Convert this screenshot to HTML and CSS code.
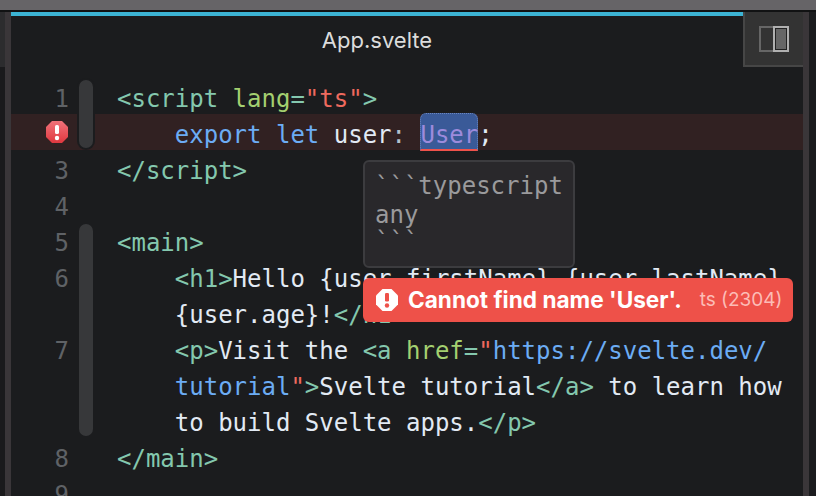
FILE: index.html
```html
<!DOCTYPE html>
<html lang="en">
<head>
<meta charset="utf-8">
<title>App.svelte</title>
<link rel="stylesheet" href="styles.css">
</head>
<body>
<div class="topbar"></div>
<div class="window">
  <div class="side-left"><div class="side-left-inner"></div></div>
  <main class="editor">
    <header class="head">
      <div class="tabline"></div>
      <div class="title">App.svelte</div>
      <button class="toggle" aria-label="Toggle preview">
        <svg width="30" height="26" viewBox="0 0 30 26">
          <rect x="1" y="1" width="15" height="24" fill="#333" stroke="#666" stroke-width="2"/>
          <rect x="15" y="1" width="14" height="24" fill="#666" stroke="#b0b0b0" stroke-width="2"/>
          <rect x="16.5" y="2.5" width="11" height="21" fill="none" stroke="#222" stroke-width="1"/>
        </svg>
      </button>
    </header>
    <div class="code">
      <div class="row"><span class="num">1</span><code class="txt"><span class="tag">&lt;script</span> <span class="attr">lang</span><span class="tag">=</span><span class="str">"ts"</span><span class="tag">&gt;</span></code></div>
      <div class="row err"><span class="num"><svg class="err-ic" width="24" height="24" viewBox="0 0 24 24"><defs><linearGradient id="eg" x1="0" y1="0" x2="0" y2="1"><stop offset="0" stop-color="#f0727a"/><stop offset="1" stop-color="#e0383f"/></linearGradient></defs><polygon points="7,1 17,1 23,7 23,17 17,23 7,23 1,17 1,7" fill="url(#eg)"/><rect x="10" y="5" width="4" height="9" rx="1.6" fill="#fff"/><circle cx="12" cy="18" r="2.2" fill="#fff"/></svg></span><code class="txt">    <span class="kw">export let</span> user<span class="pl">:</span> <span class="sel">User</span>;</code></div>
      <div class="row"><span class="num">3</span><code class="txt"><span class="tag">&lt;/script&gt;</span></code></div>
      <div class="row"><span class="num">4</span><code class="txt"></code></div>
      <div class="row"><span class="num">5</span><code class="txt"><span class="tag">&lt;main&gt;</span></code></div>
      <div class="row"><span class="num">6</span><code class="txt">    <span class="tag">&lt;h1&gt;</span>Hello {user.firstName} {user.lastName}</code></div>
      <div class="row"><span class="num"></span><code class="txt">    {user.age}!<span class="tag">&lt;/h1&gt;</span></code></div>
      <div class="row"><span class="num">7</span><code class="txt">    <span class="tag">&lt;p&gt;</span>Visit the <span class="tag">&lt;a</span> <span class="attr">href</span><span class="tag">=</span><span class="str">"</span><span class="kw">https://svelte.dev/</span></code></div>
      <div class="row"><span class="num"></span><code class="txt">    <span class="kw">tutorial</span><span class="str">"</span><span class="tag">&gt;</span>Svelte tutorial<span class="tag">&lt;/a&gt;</span> to learn how</code></div>
      <div class="row"><span class="num"></span><code class="txt">    to build Svelte apps.<span class="tag">&lt;/p&gt;</span></code></div>
      <div class="row"><span class="num">8</span><code class="txt"><span class="tag">&lt;/main&gt;</span></code></div>
      <div class="row"><span class="num">9</span><code class="txt"></code></div>
      <div class="fold fold-a"></div>
      <div class="fold fold-b"></div>
    </div>
    <div class="hover">
      <code class="hover-line">```typescript</code>
      <code class="hover-line">any</code>
      <code class="hover-line hover-close">```</code>
    </div>
    <div class="toast">
      <svg class="toast-ic" width="22" height="22" viewBox="0 0 22 22"><polygon points="6.5,0 15.5,0 22,6.5 22,15.5 15.5,22 6.5,22 0,15.5 0,6.5" fill="#fff"/><rect x="9" y="4" width="4" height="8.5" rx="1.2" fill="#ee5149"/><circle cx="11" cy="16.5" r="2.2" fill="#ee5149"/></svg>
      <span class="toast-msg">Cannot find name 'User'.</span>
      <span class="toast-code">ts (2304)</span>
    </div>
  </main>
  <div class="side-right"></div>
</div>
</body>
</html>
```
FILE: styles.css
```css
* { box-sizing: border-box; }
html, body { margin: 0; height: 100%; }
body {
  width: 816px;
  height: 496px;
  overflow: hidden;
  background: #1b1c1e;
  display: flex;
  flex-direction: column;
}
.topbar { height: 10px; background: #666467; flex: none; }
.window {
  flex: 1;
  min-height: 0;
  display: flex;
  border-top: 2px solid #111213;
}
.side-left { width: 11px; flex: none; background: #1a1a1c; border-right: 6px solid #3a3639; }
.side-left-inner { height: 55px; background: #2c2c2e; }
.side-right { width: 13px; flex: none; background: #1b1c1e; border-left: 6px solid #3a3639; }
.editor { flex: 1; position: relative; min-width: 0; background: #1b1c1e; overflow: hidden; }

.head { height: 66px; position: relative; display: flex; }
.tabline { position: absolute; left: 0; right: 60px; top: 0; height: 4px; background: #3cb4d4; }
.title {
  flex: 1;
  padding: 15px 0 0 0;
  text-align: center;
  font: 400 22px/26px Inter, "Liberation Sans", sans-serif;
  color: #dcdcdc;
}
.toggle {
  width: 60px;
  height: 55px;
  flex: none;
  padding: 0;
  background: #333333;
  border: 0;
  border-left: 2px solid #464646;
  border-bottom: 2px solid #464646;
  display: flex;
  align-items: center;
  justify-content: center;
}

.code { position: relative; }
.row {
  height: 36px;
  display: flex;
  align-items: center;
  font: 24px/36px "DejaVu Sans Mono", monospace;
  color: #e2eaf4;
}
.row.err { background: #312122; isolation: isolate; }
.num {
  width: 58px;
  flex: none;
  margin-right: 48px;
  text-align: right;
  color: #5f6266;
  display: flex;
  justify-content: flex-end;
  padding-top: 6px;
}
.txt { font: inherit; white-space: pre; padding-top: 6px; }
.err-ic { margin-top: -6px; }
.tag { color: #84c8ae; }
.attr { color: #a4d070; }
.str { color: #ee6a5e; }
.kw { color: #6cacf4; }
.pl { color: #b4c0cc; }
.sel { position: relative; color: #9d8bdc; }
.sel::before {
  content: "";
  position: absolute;
  z-index: -1;
  left: 0;
  right: 0;
  top: -8px;
  height: 35px;
  background: #3a5a98;
  border-radius: 6px 6px 0 0;
  border-top: 1px dotted #6a86c0;
  border-left: 1px dotted #6a86c0;
  border-right: 1px dotted #6a86c0;
  border-bottom: 2px solid #ef524b;
}

.fold { position: absolute; left: 68px; width: 14px; background: #37383a; border-radius: 7px; }
.fold-a { top: 2px; height: 68px; box-shadow: 0 0 0 2px #1b1c1e; }
.fold-b { top: 146px; height: 212px; }

.hover {
  position: absolute;
  left: 352px;
  top: 148px;
  width: 212px;
  height: 108px;
  background: #29282b;
  border: 2px solid #3c3c3f;
  border-radius: 6px;
  padding: 10px 10px;
}
.hover-line {
  display: block;
  white-space: pre;
  font: 24px/29px "DejaVu Sans Mono", monospace;
  color: #9a9a9c;
}
.hover-close { margin-top: -3px; }

.toast {
  position: absolute;
  left: 352px;
  top: 266px;
  width: 430px;
  height: 44px;
  background: #ee5149;
  border-radius: 6px;
  display: flex;
  align-items: center;
  padding-left: 13px;
  color: #fff;
}
.toast-ic { flex: none; }
.toast-msg { margin-left: 10px; font: 700 22.6px/26px Inter, "Liberation Sans", sans-serif; white-space: nowrap; }
.toast-code { margin-left: 18px; font: 400 19px/22px Inter, "Liberation Sans", sans-serif; color: #fcbcb6; white-space: nowrap; }
```
